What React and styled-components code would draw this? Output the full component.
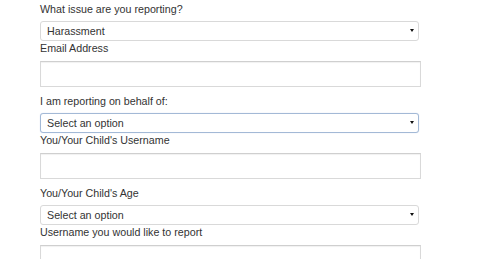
import React from "react";
import styled, { createGlobalStyle } from "styled-components";

const Global = createGlobalStyle`
  html, body { margin: 0; padding: 0; background: #fff; }
  body { font-family: "Liberation Sans", Arial, sans-serif; }
  * { box-sizing: border-box; }
`;

const Form = styled.form`
  display: flex;
  flex-direction: column;
  padding: 2px 0 0 40px;
  width: 430px;
`;

const Label = styled.label`
  display: block;
  font-size: 10.7px;
  line-height: 14px;
  height: 14px;
  color: #333;
`;

const SelectWrap = styled.div`
  position: relative;
  width: 379px;
  height: 20px;
  margin-top: 5px;
`;

const Select = styled.select`
  appearance: none;
  -webkit-appearance: none;
  display: block;
  width: 100%;
  height: 100%;
  margin: 0;
  padding: 0 16px 0 6px;
  font-family: "Liberation Sans", Arial, sans-serif;
  font-size: 10.7px;
  color: #333;
  background: #fff;
  border: 1px solid ${(p) => (p.$focused ? "#a3b9d6" : "#d9d9d9")};
  border-radius: 3px;
  box-shadow: ${(p) => (p.$focused ? "0 0 1px rgba(102,140,200,.35)" : "none")};
  outline: none;
`;

const Arrow = styled.svg`
  position: absolute;
  right: 5px;
  top: 8px;
  width: 4px;
  height: 3px;
  pointer-events: none;
`;

const Input = styled.input`
  display: block;
  width: 381px;
  height: 26px;
  margin: 6px 0 7px;
  padding: 0 6px;
  font-family: "Liberation Sans", Arial, sans-serif;
  font-size: 10.7px;
  color: #333;
  background: #fff;
  border: 1px solid #d9d9d9;
  border-top-color: #cfcfcf;
  border-radius: 0;
  box-shadow: inset 0 1px 1px rgba(0, 0, 0, 0.06);
  outline: none;
`;

function SelectField({ value, focused }) {
  return (
    <SelectWrap>
      <Select $focused={focused} defaultValue={value}>
        <option value={value}>{value}</option>
      </Select>
      <Arrow viewBox="0 0 4 3">
        <path d="M0 0 L4 0 L2 3 Z" fill="#111" />
      </Arrow>
    </SelectWrap>
  );
}

export default function App() {
  return (
    <>
      <Global />
      <Form onSubmit={(e) => e.preventDefault()}>
        <Label>What issue are you reporting?</Label>
        <SelectField value="Harassment" />
        <Label>Email Address</Label>
        <Input type="text" />
        <Label>I am reporting on behalf of:</Label>
        <SelectField value="Select an option" focused />
        <Label>You/Your Child's Username</Label>
        <Input type="text" />
        <Label>You/Your Child's Age</Label>
        <SelectField value="Select an option" />
        <Label>Username you would like to report</Label>
        <Input type="text" />
      </Form>
    </>
  );
}
